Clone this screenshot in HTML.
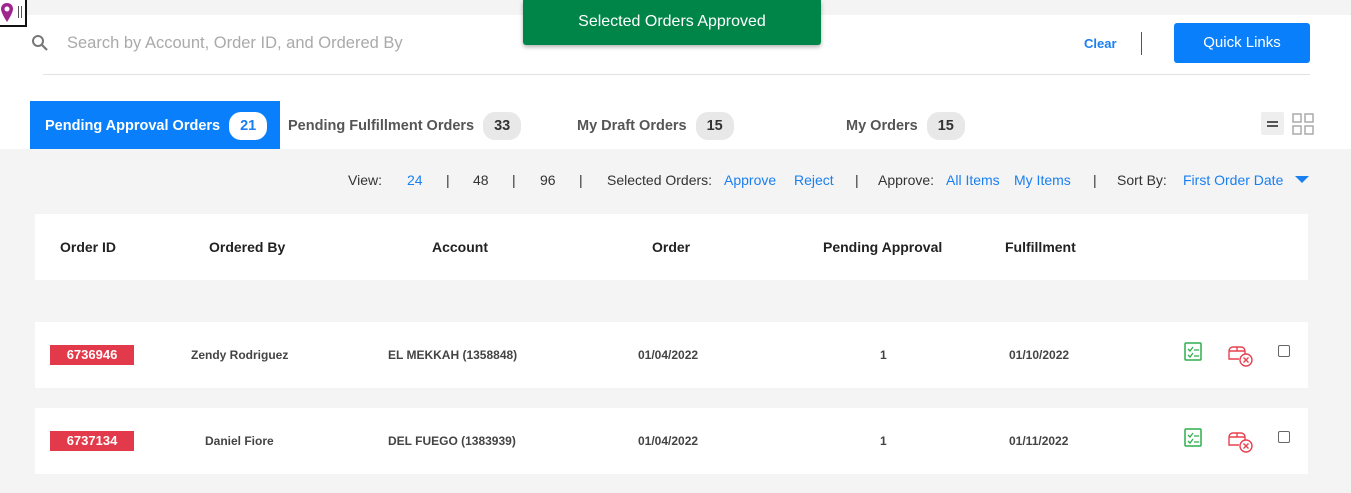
<!DOCTYPE html>
<html><head><meta charset="utf-8"><style>
*{margin:0;padding:0;box-sizing:border-box}
body{width:1351px;height:493px;background:#f4f4f4;font-family:"Liberation Sans",sans-serif;position:relative;overflow:hidden;color:#333}
.a{position:absolute;white-space:nowrap}
.white{position:absolute;left:0;top:15px;width:1351px;height:134px;background:#fff}
.blue{color:#1a7ff0}
.card{position:absolute;left:35px;width:1273px;background:#fff}
.th{font-size:14px;font-weight:bold;color:#222;top:239px}
.td{font-size:12px;font-weight:bold;color:#444}
.badge{display:inline-block;background:#e8e8e8;border-radius:12px;padding:2px 11px;font-size:14.5px;margin-left:9px;color:#333}
.tab{font-size:14.5px;font-weight:bold;color:#555;top:112px;line-height:24px}
.id{background:#e23a4a;color:#fff;font-size:13px;font-weight:bold;width:84px;height:20px;line-height:20px;text-align:center}
.cb{width:12px;height:12px;border:1.5px solid #666;border-radius:2px}
.tb{position:absolute;top:172px;font-size:14px;color:#333;white-space:nowrap}
.tb.blue{color:#1a7ff0}
</style></head><body>
<div class="white"></div>
<div class="a" style="left:0;top:0;width:27px;height:27px;border:2px solid #111;border-top:none;border-left:none;background:#fff"></div>
<svg class="a" style="left:0;top:2px" width="14" height="22" viewBox="0 0 14 22"><path d="M7 1C3 1 1 4 1 7c0 4 6 13 6 13s6-9 6-13c0-3-2-6-6-6z" fill="#a0268f"/><circle cx="7" cy="7" r="2.5" fill="#fff"/></svg>
<div class="a" style="left:18px;top:6px;width:1px;height:12px;background:#555"></div>
<div class="a" style="left:21px;top:6px;width:1px;height:12px;background:#555"></div>
<svg class="a" style="left:31px;top:34px" width="18" height="18" viewBox="0 0 18 18"><circle cx="7" cy="7" r="5" fill="none" stroke="#777" stroke-width="2"/><path d="M11 11l5 5" stroke="#777" stroke-width="2.2"/></svg>
<div class="a" style="left:67px;top:34px;font-size:16.5px;color:#aaa">Search by Account, Order ID, and Ordered By</div>
<div class="a" style="left:43px;top:74px;width:1267px;height:1px;background:#e2e2e2"></div>
<div class="a blue" style="left:1084px;top:36px;font-size:13px;font-weight:bold">Clear</div>
<div class="a" style="left:1141px;top:32px;width:1px;height:23px;background:#555"></div>
<div class="a" style="left:1174px;top:23px;width:136px;height:40px;background:#0a7ffb;border-radius:3px;color:#fff;font-size:15px;text-align:center;line-height:40px">Quick Links</div>
<div class="a" style="left:523px;top:0;width:298px;height:45px;background:#008548;color:#fff;font-size:16px;text-align:center;line-height:44px;box-shadow:0 2px 4px rgba(0,0,0,.3);border-radius:0 0 3px 3px">Selected Orders Approved</div>
<div class="a" style="left:30px;top:101px;width:250px;height:48px;background:#0a7ffb"></div>
<div class="a tab" style="left:45px;color:#fff">Pending Approval Orders<span class="badge" style="background:#fff;color:#1a7ff0">21</span></div>
<div class="a tab" style="left:288px">Pending Fulfillment Orders<span class="badge">33</span></div>
<div class="a tab" style="left:577px">My Draft Orders<span class="badge">15</span></div>
<div class="a tab" style="left:846px">My Orders<span class="badge">15</span></div>
<div class="a" style="left:1261px;top:112px;width:23px;height:23px;background:#eee;border-radius:2px"></div>
<div class="a" style="left:1267px;top:121px;width:11px;height:2px;background:#555"></div>
<div class="a" style="left:1267px;top:125px;width:11px;height:2px;background:#555"></div>
<svg class="a" style="left:1292px;top:113px" width="22" height="22"><g fill="none" stroke="#aaa" stroke-width="1.5"><rect x="1" y="1" width="8" height="8"/><rect x="13" y="1" width="8" height="8"/><rect x="1" y="13" width="8" height="8"/><rect x="13" y="13" width="8" height="8"/></g></svg>
<div class="tb" style="left:348px">View:</div>
<div class="tb blue" style="left:407px">24</div>
<div class="tb" style="left:446px">|</div>
<div class="tb" style="left:473px">48</div>
<div class="tb" style="left:512px">|</div>
<div class="tb" style="left:540px">96</div>
<div class="tb" style="left:579px">|</div>
<div class="tb" style="left:607px">Selected Orders:</div>
<div class="tb blue" style="left:724px">Approve</div>
<div class="tb blue" style="left:794px">Reject</div>
<div class="tb" style="left:855px">|</div>
<div class="tb" style="left:878px">Approve:</div>
<div class="tb blue" style="left:946px">All Items</div>
<div class="tb blue" style="left:1014px">My Items</div>
<div class="tb" style="left:1093px">|</div>
<div class="tb" style="left:1117px">Sort By:</div>
<div class="tb blue" style="left:1183px">First Order Date</div>
<svg class="a" style="left:1295px;top:176px" width="14" height="8"><path d="M0 0h14L7 7z" fill="#1a7ff0"/></svg>
<div class="card" style="top:214px;height:66px"></div>
<div class="a th" style="left:60px">Order ID</div>
<div class="a th" style="left:209px">Ordered By</div>
<div class="a th" style="left:432px">Account</div>
<div class="a th" style="left:652px">Order</div>
<div class="a th" style="left:823px">Pending Approval</div>
<div class="a th" style="left:1005px">Fulfillment</div>
<div class="card" style="top:322px;height:66px"></div>
<div class="card" style="top:408px;height:66px"></div>
<div class="a id" style="left:50px;top:345px">6736946</div>
<div class="a td" style="left:191px;top:348px">Zendy Rodriguez</div>
<div class="a td" style="left:388px;top:348px">EL MEKKAH (1358848)</div>
<div class="a td" style="left:638px;top:348px">01/04/2022</div>
<div class="a td" style="left:880px;top:348px">1</div>
<div class="a td" style="left:1009px;top:348px">01/10/2022</div>
<div class="a id" style="left:50px;top:431px">6737134</div>
<div class="a td" style="left:205px;top:434px">Daniel Fiore</div>
<div class="a td" style="left:388px;top:434px">DEL FUEGO (1383939)</div>
<div class="a td" style="left:638px;top:434px">01/04/2022</div>
<div class="a td" style="left:880px;top:434px">1</div>
<div class="a td" style="left:1009px;top:434px">01/11/2022</div>
<svg class="a" style="left:1184px;top:342px" width="18" height="20"><rect x="1" y="1" width="16" height="17" rx="1" fill="none" stroke="#2fae4e" stroke-width="1.5"/><path d="M4 7l2 2 3-4M4 13l2 2 3-4M10 8h5M10 14h5" stroke="#2fae4e" stroke-width="1.3" fill="none"/></svg>
<svg class="a" style="left:1228px;top:342px" width="26" height="26"><g fill="none" stroke="#e8404f" stroke-width="1.4"><path d="M5 5h8a4 4 0 0 1 4 4v3M1 9a4 4 0 0 1 4-4M1 9v8h10M1 9h16M9 5v4"/><circle cx="18" cy="18" r="6" fill="#fff"/><path d="M15.5 15.5l5 5M20.5 15.5l-5 5"/></g></svg>
<div class="a cb" style="left:1278px;top:345px"></div>
<svg class="a" style="left:1184px;top:428px" width="18" height="20"><rect x="1" y="1" width="16" height="17" rx="1" fill="none" stroke="#2fae4e" stroke-width="1.5"/><path d="M4 7l2 2 3-4M4 13l2 2 3-4M10 8h5M10 14h5" stroke="#2fae4e" stroke-width="1.3" fill="none"/></svg>
<svg class="a" style="left:1228px;top:428px" width="26" height="26"><g fill="none" stroke="#e8404f" stroke-width="1.4"><path d="M5 5h8a4 4 0 0 1 4 4v3M1 9a4 4 0 0 1 4-4M1 9v8h10M1 9h16M9 5v4"/><circle cx="18" cy="18" r="6" fill="#fff"/><path d="M15.5 15.5l5 5M20.5 15.5l-5 5"/></g></svg>
<div class="a cb" style="left:1278px;top:431px"></div>
</body></html>
